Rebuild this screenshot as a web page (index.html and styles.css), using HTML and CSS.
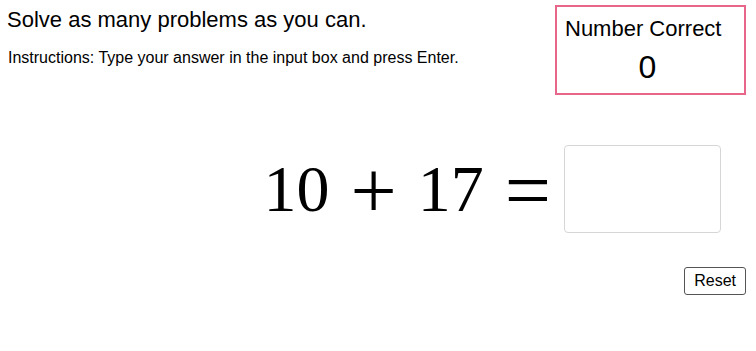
FILE: index.html
```html
<!DOCTYPE html>
<html>
<head>
  <title>Math Drill</title>
  <link rel="stylesheet" href="styles.css">
  <meta charset="utf-8">
</head>
<body>
  <div class="top">
    <div class="intro">
      <h1>Solve as many problems as you can.</h1>
      <p>Instructions: Type your answer in the input box and press Enter.</p>
    </div>
    <div class="score">
      <div class="score-label">Number Correct</div>
      <div class="score-num">0</div>
    </div>
  </div>
  <div class="problem">
    <span class="eq">10<span class="op">+</span>17<span class="op">=</span></span>
    <input type="text" class="answer">
  </div>
  <div class="ctrl">
    <button class="reset">Reset</button>
  </div>
</body>
</html>
```

FILE: styles.css
```css
body {
  margin: 0;
  padding: 5px 10px 0 7px;
  font-family: "Liberation Sans", Arial, sans-serif;
  color: #000;
  background: #fff;
}

.top {
  display: flex;
  justify-content: space-between;
  align-items: flex-start;
}

h1 {
  font-size: 22px;
  font-weight: normal;
  margin: 2px 0 0 0;
}

.intro p {
  font-size: 16px;
  margin: 16px 0 0 1px;
}

.score {
  width: 187px;
  height: 86px;
  border: 2px solid #e8668a;
  box-sizing: content-box;
}
.score-label {
  font-size: 22px;
  margin-top: 9px;
  padding-left: 8px;
}
.score-num {
  font-size: 32px;
  margin-top: 7px;
  text-align: center;
  padding-right: 6px;
}

.problem {
  display: flex;
  justify-content: flex-end;
  align-items: center;
  margin-top: 50px;
  padding-right: 25px;
}
.eq {
  font-family: "Liberation Serif", "DejaVu Serif", serif;
  font-size: 66px;
  margin-right: -8px;
}
.op {
  font-size: 82px;
  line-height: 0;
  margin: 0 21px;
  vertical-align: -7px;
}
.answer {
  width: 155px;
  height: 86px;
  border: 1px solid #d6d6d6;
  border-radius: 4px;
  padding: 0;
}

.ctrl {
  display: flex;
  justify-content: flex-end;
  margin-top: 34px;
}
.reset {
  font-family: "Liberation Sans", Arial, sans-serif;
  font-size: 16px;
  background: #fff;
  border: 1px solid #555;
  border-radius: 3px;
  padding: 4px 9px;
}
```
